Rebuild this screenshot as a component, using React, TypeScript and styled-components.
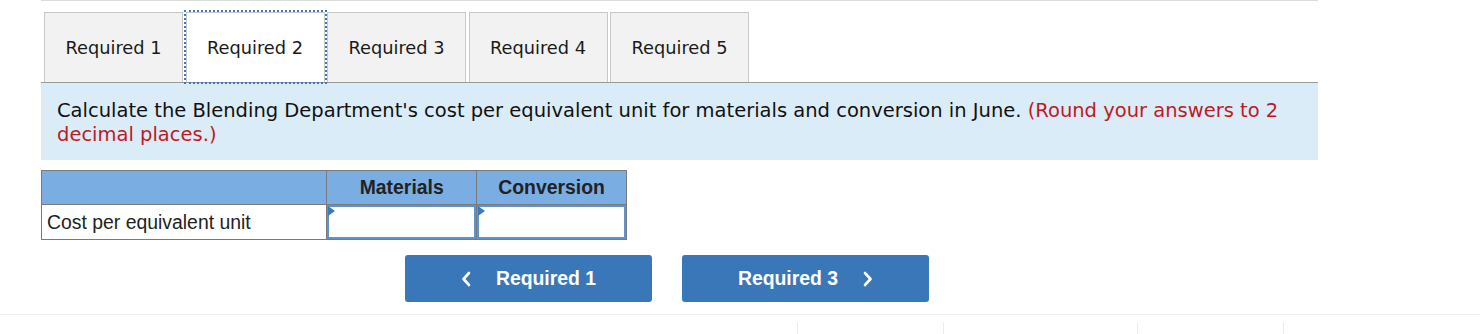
import React from "react";
import styled, { createGlobalStyle } from "styled-components";

const Global = createGlobalStyle`
  html, body { margin: 0; padding: 0; background: #fff; }
  body { font-family: "DejaVu Sans", Verdana, sans-serif; }
`;

const Page = styled.div`
  width: 1480px;
  height: 334px;
  overflow: hidden;
  display: flex;
  flex-direction: column;
`;

const Main = styled.div`
  margin-left: 41px;
  width: 1277px;
  border-top: 1px solid #dcdcdc;
  padding-top: 11px;
  display: flex;
  flex-direction: column;
`;

const TabList = styled.div`
  display: flex;
  gap: 2.5px;
  padding-left: 3px;
  border-bottom: 1px solid #9a9a9a;
  height: 70px;
`;

const Tab = styled.button<{ $active?: boolean }>`
  width: 139px;
  height: 70px;
  box-sizing: border-box;
  border: 1px solid #c8c8c8;
  border-bottom: none;
  background: ${(p) => (p.$active ? "#fff" : "#f2f2f2")};
  font-family: "DejaVu Sans", Verdana, sans-serif;
  font-size: 17.8px;
  color: #1a1a1a;
  padding: 0;
  cursor: pointer;
  outline: ${(p) => (p.$active ? "2px dotted #3b78c2" : "none")};
  outline-offset: 0px;
  position: relative;
  z-index: ${(p) => (p.$active ? 1 : 0)};
`;

const Prompt = styled.div`
  background: #dbecf9;
  padding: 16px 16px 13px;
  font-size: 19.5px;
  line-height: 24px;
  color: #111;
`;

const Hint = styled.span`
  color: #bf1a22;
`;

const Table = styled.table`
  margin-top: 10px;
  border-collapse: collapse;
  width: 586px;
  font-family: "Liberation Sans", Arial, sans-serif;
  font-size: 19.4px;
`;

const HeadCell = styled.th`
  background: #7aaee3;
  border: 1px solid #7a7a7a;
  height: 33px;
  padding: 0;
  font-weight: bold;
  color: #222;
  text-align: center;
`;

const LabelCell = styled.td`
  border: 1px solid #7a7a7a;
  height: 34px;
  padding: 0 0 0 5px;
  color: #222;
  width: 280px;
`;

const InputCell = styled.td`
  border: 1px solid #7a7a7a;
  padding: 0;
  width: 149px;
  height: 34px;
  position: relative;
`;

const Field = styled.div`
  box-sizing: border-box;
  height: 34px;
  border: 2px solid #5f93d0;
  background: #fff;
`;

const Marker = styled.span`
  position: absolute;
  left: 1px;
  top: 1px;
  width: 0;
  height: 0;
  border-top: 5px solid transparent;
  border-bottom: 5px solid transparent;
  border-left: 7px solid #3b78c2;
`;

const NavRow = styled.div`
  display: flex;
  gap: 30px;
  margin-top: 15px;
  margin-left: 364px;
`;

const NavButton = styled.button`
  width: 247px;
  height: 47px;
  background: #3a77b9;
  border: none;
  border-radius: 3px;
  color: #fff;
  font-family: "Liberation Sans", Arial, sans-serif;
  font-weight: bold;
  font-size: 19.4px;
  display: flex;
  align-items: center;
  justify-content: center;
  gap: 25px;
  cursor: pointer;
  padding: 0;
`;

const Footer = styled.div`
  margin-top: 12px;
  border-top: 1px solid #ececec;
  height: 20px;
  display: flex;
  padding-top: 7px;
  box-sizing: border-box;
`;

const FooterCol = styled.div<{ $w: number }>`
  width: ${(p) => p.$w}px;
  border-right: 1px solid #ececec;
`;

const Chevron = ({ dir }: { dir: "left" | "right" }) => (
  <svg width="10" height="16" viewBox="0 0 10 16" fill="none">
    <path
      d={dir === "left" ? "M8 2 L2.5 8 L8 14" : "M2 2 L7.5 8 L2 14"}
      stroke="#fff"
      strokeWidth="2.6"
      strokeLinecap="round"
      strokeLinejoin="round"
    />
  </svg>
);

export default function App() {
  const tabs = ["Required 1", "Required 2", "Required 3", "Required 4", "Required 5"];
  return (
    <Page>
      <Global />
      <Main>
        <TabList>
          {tabs.map((t, i) => (
            <Tab key={t} $active={i === 1}>
              {t}
            </Tab>
          ))}
        </TabList>
        <Prompt>
          Calculate the Blending Department's cost per equivalent unit for materials and conversion in June.{" "}
          <Hint>(Round your answers to 2 decimal places.)</Hint>
        </Prompt>
        <Table>
          <thead>
            <tr>
              <HeadCell></HeadCell>
              <HeadCell>Materials</HeadCell>
              <HeadCell>Conversion</HeadCell>
            </tr>
          </thead>
          <tbody>
            <tr>
              <LabelCell>Cost per equivalent unit</LabelCell>
              <InputCell>
                <Field />
                <Marker />
              </InputCell>
              <InputCell>
                <Field />
                <Marker />
              </InputCell>
            </tr>
          </tbody>
        </Table>
        <NavRow>
          <NavButton>
            <Chevron dir="left" />
            <span>Required 1</span>
          </NavButton>
          <NavButton>
            <span>Required 3</span>
            <Chevron dir="right" />
          </NavButton>
        </NavRow>
      </Main>
      <Footer>
        <FooterCol $w={797} />
        <FooterCol $w={145} />
        <FooterCol $w={193} />
        <FooterCol $w={145} />
      </Footer>
    </Page>
  );
}
